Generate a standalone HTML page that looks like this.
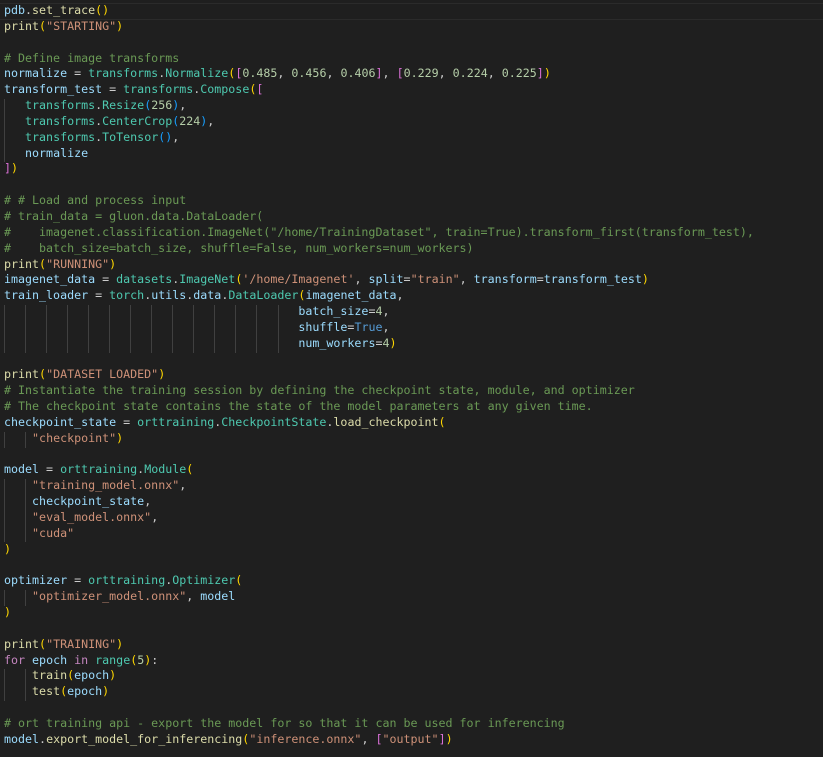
<!DOCTYPE html>
<html><head><meta charset="utf-8"><style>
html,body{margin:0;padding:0;background:#1f1f1f;width:823px;height:757px;overflow:hidden}
#c{position:relative;font-family:"DejaVu Sans Mono","Liberation Mono",monospace;font-size:11.65px;line-height:15.85px;color:#cccccc;padding-top:3px}
.l{white-space:pre;padding-left:4px;height:15.85px}
.cur{position:absolute;left:0;right:0;top:3px;height:15px;border-top:1px solid #2b2b2b;border-bottom:1px solid #2b2b2b}
.g{position:absolute;width:1px;background:#404040}
.v{color:#9cdcfe}.c{color:#4ec9b0}.f{color:#dcdcaa}.s{color:#ce9178}.m{color:#6a9955}.n{color:#b5cea8}.k{color:#c586c0}.b{color:#569cd6}
.y{color:#ffd700}.p{color:#da70d6}.u{color:#179fff}
</style></head><body><div id="c">
<div class="cur"></div>
<div class="l"><span class="v">pdb</span>.<span class="f">set_trace</span><span class="y">()</span></div>
<div class="l"><span class="f">print</span><span class="y">(</span><span class="s">"STARTING"</span><span class="y">)</span></div>
<div class="l"> </div>
<div class="l"><span class="m"># Define image transforms</span></div>
<div class="l"><span class="v">normalize</span> = <span class="c">transforms</span>.<span class="c">Normalize</span><span class="y">(</span><span class="p">[</span><span class="n">0.485</span>, <span class="n">0.456</span>, <span class="n">0.406</span><span class="p">]</span>, <span class="p">[</span><span class="n">0.229</span>, <span class="n">0.224</span>, <span class="n">0.225</span><span class="p">]</span><span class="y">)</span></div>
<div class="l"><span class="v">transform_test</span> = <span class="c">transforms</span>.<span class="c">Compose</span><span class="y">(</span><span class="p">[</span></div>
<div class="l">   <span class="c">transforms</span>.<span class="c">Resize</span><span class="u">(</span><span class="n">256</span><span class="u">)</span>,</div>
<div class="l">   <span class="c">transforms</span>.<span class="c">CenterCrop</span><span class="u">(</span><span class="n">224</span><span class="u">)</span>,</div>
<div class="l">   <span class="c">transforms</span>.<span class="c">ToTensor</span><span class="u">()</span>,</div>
<div class="l">   <span class="v">normalize</span></div>
<div class="l"><span class="p">]</span><span class="y">)</span></div>
<div class="l"> </div>
<div class="l"><span class="m"># # Load and process input</span></div>
<div class="l"><span class="m"># train_data = gluon.data.DataLoader(</span></div>
<div class="l"><span class="m">#    imagenet.classification.ImageNet("/home/TrainingDataset", train=True).transform_first(transform_test),</span></div>
<div class="l"><span class="m">#    batch_size=batch_size, shuffle=False, num_workers=num_workers)</span></div>
<div class="l"><span class="f">print</span><span class="y">(</span><span class="s">"RUNNING"</span><span class="y">)</span></div>
<div class="l"><span class="v">imagenet_data</span> = <span class="c">datasets</span>.<span class="c">ImageNet</span><span class="y">(</span><span class="s">'/home/Imagenet'</span>, <span class="v">split</span>=<span class="s">"train"</span>, <span class="v">transform</span>=<span class="v">transform_test</span><span class="y">)</span></div>
<div class="l"><span class="v">train_loader</span> = <span class="c">torch</span>.<span class="v">utils</span>.<span class="v">data</span>.<span class="c">DataLoader</span><span class="y">(</span><span class="v">imagenet_data</span>,</div>
<div class="l">                                          <span class="v">batch_size</span>=<span class="n">4</span>,</div>
<div class="l">                                          <span class="v">shuffle</span>=<span class="b">True</span>,</div>
<div class="l">                                          <span class="v">num_workers</span>=<span class="n">4</span><span class="y">)</span></div>
<div class="l"> </div>
<div class="l"><span class="f">print</span><span class="y">(</span><span class="s">"DATASET LOADED"</span><span class="y">)</span></div>
<div class="l"><span class="m"># Instantiate the training session by defining the checkpoint state, module, and optimizer</span></div>
<div class="l"><span class="m"># The checkpoint state contains the state of the model parameters at any given time.</span></div>
<div class="l"><span class="v">checkpoint_state</span> = <span class="c">orttraining</span>.<span class="c">CheckpointState</span>.<span class="f">load_checkpoint</span><span class="y">(</span></div>
<div class="l">    <span class="s">"checkpoint"</span><span class="y">)</span></div>
<div class="l"> </div>
<div class="l"><span class="v">model</span> = <span class="c">orttraining</span>.<span class="c">Module</span><span class="y">(</span></div>
<div class="l">    <span class="s">"training_model.onnx"</span>,</div>
<div class="l">    <span class="v">checkpoint_state</span>,</div>
<div class="l">    <span class="s">"eval_model.onnx"</span>,</div>
<div class="l">    <span class="s">"cuda"</span></div>
<div class="l"><span class="y">)</span></div>
<div class="l"> </div>
<div class="l"><span class="v">optimizer</span> = <span class="c">orttraining</span>.<span class="c">Optimizer</span><span class="y">(</span></div>
<div class="l">    <span class="s">"optimizer_model.onnx"</span>, <span class="v">model</span></div>
<div class="l"><span class="y">)</span></div>
<div class="l"> </div>
<div class="l"><span class="f">print</span><span class="y">(</span><span class="s">"TRAINING"</span><span class="y">)</span></div>
<div class="l"><span class="k">for</span> <span class="v">epoch</span> <span class="k">in</span> <span class="c">range</span><span class="y">(</span><span class="n">5</span><span class="y">)</span>:</div>
<div class="l">    <span class="f">train</span><span class="y">(</span><span class="v">epoch</span><span class="y">)</span></div>
<div class="l">    <span class="f">test</span><span class="y">(</span><span class="v">epoch</span><span class="y">)</span></div>
<div class="l"> </div>
<div class="l"><span class="m"># ort training api - export the model for so that it can be used for inferencing</span></div>
<div class="l"><span class="v">model</span>.<span class="f">export_model_for_inferencing</span><span class="y">(</span><span class="s">"inference.onnx"</span>, <span class="p">[</span><span class="s">"output"</span><span class="p">]</span><span class="y">)</span></div>

<div class="g" style="left:4px;top:99px;height:63px"></div>
<div class="g" style="left:4px;top:305px;height:48px"></div>
<div class="g" style="left:25px;top:305px;height:48px"></div>
<div class="g" style="left:46px;top:305px;height:48px"></div>
<div class="g" style="left:67px;top:305px;height:48px"></div>
<div class="g" style="left:88px;top:305px;height:48px"></div>
<div class="g" style="left:109px;top:305px;height:48px"></div>
<div class="g" style="left:130px;top:305px;height:48px"></div>
<div class="g" style="left:151px;top:305px;height:48px"></div>
<div class="g" style="left:172px;top:305px;height:48px"></div>
<div class="g" style="left:193px;top:305px;height:48px"></div>
<div class="g" style="left:214px;top:305px;height:48px"></div>
<div class="g" style="left:235px;top:305px;height:48px"></div>
<div class="g" style="left:256px;top:305px;height:48px"></div>
<div class="g" style="left:278px;top:305px;height:48px"></div>
<div class="g" style="left:4px;top:432px;height:16px"></div>
<div class="g" style="left:25px;top:432px;height:16px"></div>
<div class="g" style="left:4px;top:479px;height:63px"></div>
<div class="g" style="left:25px;top:479px;height:63px"></div>
<div class="g" style="left:4px;top:590px;height:16px"></div>
<div class="g" style="left:25px;top:590px;height:16px"></div>
<div class="g" style="left:4px;top:669px;height:32px"></div>
<div class="g" style="left:25px;top:669px;height:32px"></div>
</div></body></html>
